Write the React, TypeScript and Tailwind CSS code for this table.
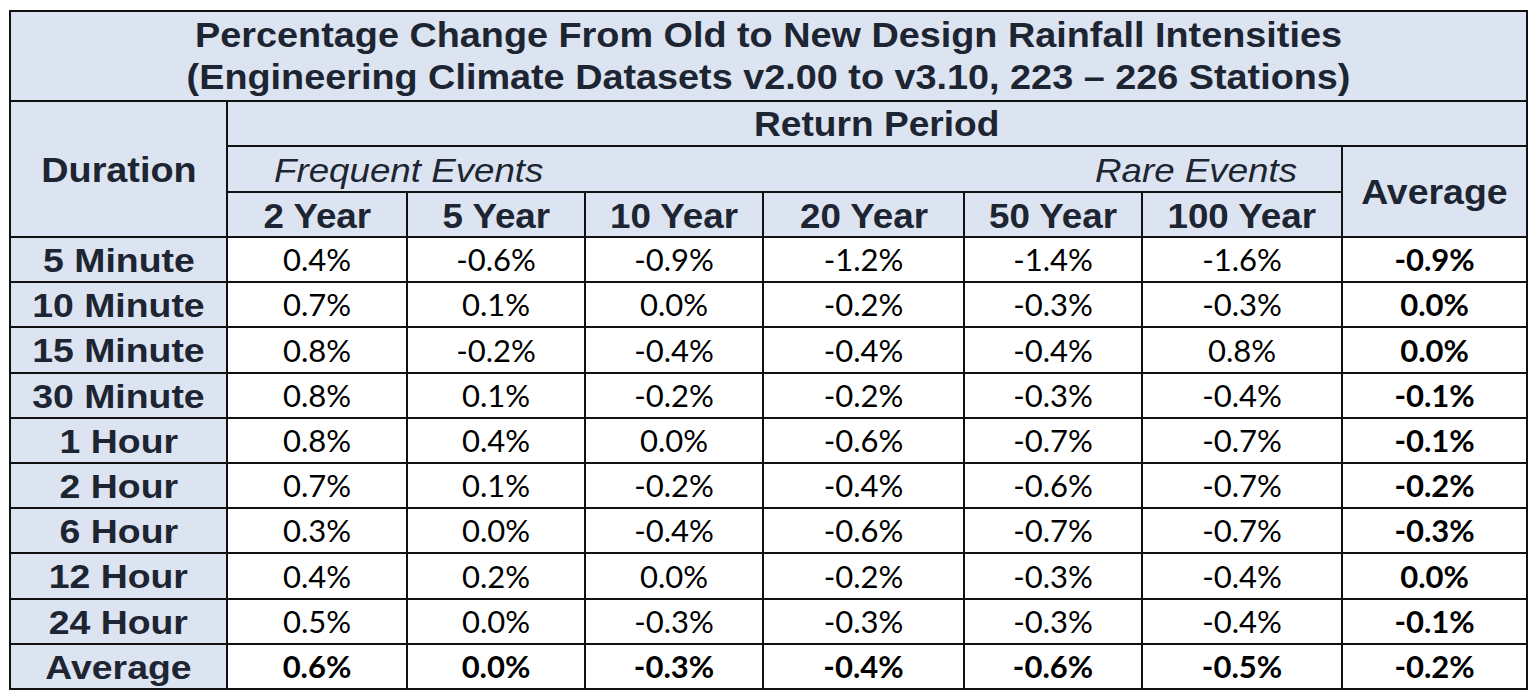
import React from "react";

const years = ["2 Year", "5 Year", "10 Year", "20 Year", "50 Year", "100 Year"];

const rows: { label: string; vals: string[]; avg: string; h: string }[] = [
  { label: "5 Minute", vals: ["0.4%", "-0.6%", "-0.9%", "-1.2%", "-1.4%", "-1.6%"], avg: "-0.9%", h: "h-[45px]" },
  { label: "10 Minute", vals: ["0.7%", "0.1%", "0.0%", "-0.2%", "-0.3%", "-0.3%"], avg: "0.0%", h: "h-[45px]" },
  { label: "15 Minute", vals: ["0.8%", "-0.2%", "-0.4%", "-0.4%", "-0.4%", "0.8%"], avg: "0.0%", h: "h-[46px]" },
  { label: "30 Minute", vals: ["0.8%", "0.1%", "-0.2%", "-0.2%", "-0.3%", "-0.4%"], avg: "-0.1%", h: "h-[45px]" },
  { label: "1 Hour", vals: ["0.8%", "0.4%", "0.0%", "-0.6%", "-0.7%", "-0.7%"], avg: "-0.1%", h: "h-[45px]" },
  { label: "2 Hour", vals: ["0.7%", "0.1%", "-0.2%", "-0.4%", "-0.6%", "-0.7%"], avg: "-0.2%", h: "h-[45px]" },
  { label: "6 Hour", vals: ["0.3%", "0.0%", "-0.4%", "-0.6%", "-0.7%", "-0.7%"], avg: "-0.3%", h: "h-[45px]" },
  { label: "12 Hour", vals: ["0.4%", "0.2%", "0.0%", "-0.2%", "-0.3%", "-0.4%"], avg: "0.0%", h: "h-[46px]" },
  { label: "24 Hour", vals: ["0.5%", "0.0%", "-0.3%", "-0.3%", "-0.3%", "-0.4%"], avg: "-0.1%", h: "h-[45px]" },
];

const avgRow = { label: "Average", vals: ["0.6%", "0.0%", "-0.3%", "-0.4%", "-0.6%", "-0.5%"], avg: "-0.2%" };

const hd = "font-['Liberation_Sans',Arial,sans-serif] text-[#1d2532]";
const data = "font-['Lato','Open_Sans',sans-serif] text-[31px] text-black";
const cell = "border-2 border-[#111] p-0 text-center align-middle leading-none";

export default function App() {
  return (
    <div className="w-[1531px] h-[699px] bg-white pt-[10px] pl-[9px] overflow-hidden">
      <table className="table-fixed border-collapse w-[1517px]">
        <colgroup>
          <col className="w-[217px]" />
          <col className="w-[180px]" />
          <col className="w-[178px]" />
          <col className="w-[178px]" />
          <col className="w-[201px]" />
          <col className="w-[178px]" />
          <col className="w-[200px]" />
          <col className="w-[185px]" />
        </colgroup>
        <thead>
          <tr className="h-[90px]">
            <th colSpan={8} className={`${cell} bg-[#dbe4f0] ${hd}`}>
              <div className="text-[35px] leading-[42px] font-bold scale-x-[1.08]">
                <div>Percentage Change From Old to New Design Rainfall Intensities</div>
                <div>(Engineering Climate Datasets v2.00 to v3.10, 223 – 226 Stations)</div>
              </div>
            </th>
          </tr>
          <tr className="h-[45px]">
            <th rowSpan={3} className={`${cell} bg-[#dbe4f0] ${hd}`}>
              <span className="inline-block text-[35px] font-bold scale-x-[1.08]">Duration</span>
            </th>
            <th colSpan={7} className={`${cell} bg-[#dbe4f0] ${hd}`}>
              <span className="inline-block text-[35px] font-bold scale-x-[1.06]">Return Period</span>
            </th>
          </tr>
          <tr className="h-[46px]">
            <th colSpan={6} className={`${cell} bg-[#dbe4f0] ${hd} font-normal`}>
              <div className="flex items-center justify-between pl-[46px] pr-[44px] pt-[2px]">
                <span className="inline-block text-[34px] italic font-normal scale-x-[1.08] origin-left">Frequent Events</span>
                <span className="inline-block text-[34px] italic font-normal scale-x-[1.08] origin-right">Rare Events</span>
              </div>
            </th>
            <th rowSpan={2} className={`${cell} bg-[#dbe4f0] ${hd}`}>
              <span className="inline-block text-[35px] font-bold scale-x-[1.07]">Average</span>
            </th>
          </tr>
          <tr className="h-[45px]">
            {years.map((y) => (
              <th key={y} className={`${cell} bg-[#dbe4f0] ${hd}`}>
                <span className="inline-block text-[35px] font-bold scale-x-[1.05] pt-[2px]">{y}</span>
              </th>
            ))}
          </tr>
        </thead>
        <tbody>
          {rows.map((r) => (
            <tr key={r.label} className={r.h}>
              <th className={`${cell} bg-[#dbe4f0] ${hd}`}>
                <span className="inline-block text-[34px] font-bold scale-x-[1.1]">{r.label}</span>
              </th>
              {r.vals.map((v, i) => (
                <td key={i} className={`${cell} bg-white ${data}`}>
                  {v}
                </td>
              ))}
              <td className={`${cell} bg-white ${data} font-bold`}>{r.avg}</td>
            </tr>
          ))}
          <tr className="h-[45px]">
            <th className={`${cell} bg-[#dbe4f0] ${hd}`}>
              <span className="inline-block text-[34px] font-bold scale-x-[1.1]">{avgRow.label}</span>
            </th>
            {avgRow.vals.map((v, i) => (
              <td key={i} className={`${cell} bg-white ${data} font-bold`}>
                {v}
              </td>
            ))}
            <td className={`${cell} bg-white ${data} font-bold`}>{avgRow.avg}</td>
          </tr>
        </tbody>
      </table>
    </div>
  );
}
